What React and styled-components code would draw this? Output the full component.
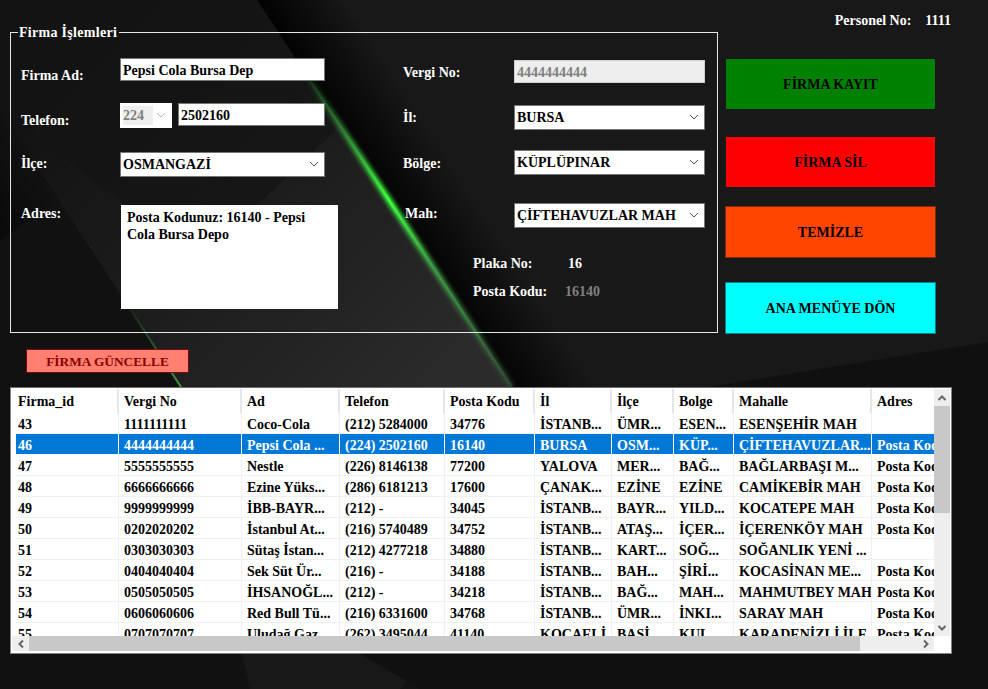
import React from 'react';
import styled, { createGlobalStyle } from 'styled-components';

const GlobalStyle = createGlobalStyle`
	* {
		box-sizing: border-box;
	}
	html, body {
		margin: 0;
		padding: 0;
		background: #151515;
	}
	body, input, select, textarea, button {
		font-family: 'Liberation Serif', 'Times New Roman', serif;
		font-size: 14px;
		font-weight: bold;
	}
`;

const Page = styled.div`
	position: relative;
	width: 988px;
	height: 689px;
	overflow: hidden;
	color: #fff;
`;

const Backdrop = styled.svg`
	position: absolute;
	inset: 0;
	z-index: 0;
`;

const Content = styled.div`
	position: relative;
	z-index: 1;
`;

const TopBar = styled.div`
	height: 23px;
	padding: 13px 37px 0 0;
	display: flex;
	justify-content: flex-end;
	gap: 14px;
	line-height: 16px;
`;

const MainRow = styled.div`
	display: flex;
	align-items: flex-start;
	padding-left: 10px;
	gap: 8px;
`;

const GroupBox = styled.fieldset`
	width: 708px;
	height: 310px;
	margin: 0;
	padding: 0;
	border: 1px solid #e6e6e6;
	display: flex;
`;

const GroupTitle = styled.legend`
	margin-left: 7px;
	padding: 2px 2px 0 1px;
	line-height: 16px;
	letter-spacing: 0.3px;
`;

const FormColumn = styled.div`
	width: ${(p) => p.$width}px;
	padding-left: ${(p) => p.$left}px;
	display: flex;
	flex-direction: column;
`;

const FieldRow = styled.div`
	display: flex;
	align-items: flex-start;
	margin-top: ${(p) => p.$gap}px;
`;

const FieldLabel = styled.label`
	flex: none;
	width: ${(p) => p.$width}px;
	padding-top: ${(p) => p.$drop}px;
	padding-left: ${(p) => p.$indent || 0}px;
	line-height: 16px;
`;

const TextBox = styled.input`
	width: ${(p) => p.$width}px;
	height: 23px;
	margin-left: ${(p) => p.$gapLeft || 0}px;
	padding: 3px 2px 0;
	border: 1px solid #767676;
	border-radius: 0;
	outline: none;
	background: #fff;
	color: #000;

	&:disabled {
		border-color: #cfcfcf;
		background: #eee;
		color: #808080;
	}
`;

const SelectBox = styled.div`
	position: relative;
	width: ${(p) => p.$width}px;
	height: 25px;
	background: #fff;
	border: 1px solid ${(p) => (p.$off ? '#fff' : '#767676')};
	flex: none;

	select {
		appearance: none;
		display: block;
		width: ${(p) => (p.$off ? '30px' : '100%')};
		height: ${(p) => (p.$off ? '19px' : '100%')};
		margin: ${(p) => (p.$off ? '2px' : '0')};
		padding: 0 ${(p) => (p.$off ? '0' : '2px')};
		border: 0;
		border-radius: 0;
		outline: none;
		background: ${(p) => (p.$off ? '#eee' : 'transparent')};
		color: ${(p) => (p.$off ? '#808080' : '#000')};
		opacity: 1;
	}
`;

const Chevron = styled.svg`
	position: absolute;
	right: 5px;
	top: 8px;
	pointer-events: none;
`;

const AddressBox = styled.textarea`
	width: 217px;
	height: 104px;
	margin: 1px;
	padding: 4px 6px;
	border: 0;
	border-radius: 0;
	outline: none;
	resize: none;
	overflow: hidden;
	background: #fff;
	color: #000;
	line-height: 17px;
`;

const InfoBlock = styled.div`
	margin: ${(p) => p.$gap}px 0 0 70px;
	display: flex;
	flex-direction: column;
	gap: 12px;
`;

const InfoRow = styled.div`
	display: flex;
	line-height: 16px;
`;

const InfoLabel = styled.span`
	width: ${(p) => p.$width}px;
`;

const InfoValue = styled.span`
	color: ${(p) => (p.$muted ? '#808080' : '#fff')};
`;

const ButtonColumn = styled.div`
	width: 209px;
	padding-top: 36px;
	display: flex;
	flex-direction: column;
`;

const ActionButton = styled.button`
	width: 209px;
	height: 50px;
	margin-top: ${(p) => p.$gap}px;
	padding: 2px 0 0;
	border: 0;
	background: ${(p) => p.$color};
	box-shadow: ${(p) => (p.$edge ? `0 0 0 1px ${p.$edge}` : 'none')};
	color: #000;
`;

const UpdateButton = styled.button`
	display: block;
	width: 163px;
	height: 24px;
	margin: 16px 0 0 26px;
	padding: 2px 0 0;
	border: 1px solid #7a0b0b;
	background: #ff7f70;
	color: #8b0000;
	font-size: 13.33px;
`;

const GridFrame = styled.div`
	width: 942px;
	height: 267px;
	margin: 14px 0 0 10px;
	padding: 1px 1px 2px 1px;
	border: 1px solid #80838c;
	border-top-color: #6c6c74;
	background: #fff;
	display: grid;
	grid-template-columns: 922px 16px;
	grid-template-rows: 247px 15px;
`;

const GridView = styled.div`
	overflow: hidden;
	padding-left: 4px;
	color: #000;
	line-height: 16px;
`;

const columns = '103px 123px 98px 105px 90px 77px 62px 60px 138px 300px';

const HeadRow = styled.div`
	display: grid;
	grid-template-columns: ${columns};
	width: 1156px;
	height: 24px;
`;

const HeadCell = styled.div`
	padding: 5px 0 0 ${(p) => (p.$first ? 2 : 5)}px;
	border-right: 2px solid #e6e6e6;
`;

const DataRow = styled.div`
	display: grid;
	grid-template-columns: ${columns};
	width: 1156px;
	height: 21px;
	color: ${(p) => (p.$selected ? '#fff' : '#000')};
`;

const DataCell = styled.div`
	overflow: hidden;
	white-space: nowrap;
	padding: 4px 0 0 ${(p) => (p.$first ? 2 : 5)}px;
	background: ${(p) => (p.$selected ? '#0078d7' : '#fff')};
	border-right: 1px solid ${(p) => (p.$selected ? '#fff' : '#f0f0f0')};
	border-bottom: 1px solid ${(p) => (p.$selected ? '#fff' : '#f0f0f0')};
`;

const VerticalBar = styled.div`
	background: #eee;
	display: flex;
	flex-direction: column;
	align-items: center;
`;

const HorizontalBar = styled.div`
	background: #eee;
	display: flex;
	align-items: center;
`;

const ArrowBox = styled.div`
	flex: none;
	width: ${(p) => p.$w}px;
	height: ${(p) => p.$h}px;
	display: flex;
	align-items: center;
	justify-content: center;
`;

const VerticalThumb = styled.div`
	width: 100%;
	height: 107px;
	background: #c8c8c8;
`;

const HorizontalThumb = styled.div`
	width: 831px;
	height: 100%;
	background: #c8c8c8;
`;

const BarSpacer = styled.div`
	flex: 1;
`;

const Corner = styled.div`
	background: #fff;
`;

const headers = ['Firma_id', 'Vergi No', 'Ad', 'Telefon', 'Posta Kodu', 'İl', 'İlçe', 'Bolge', 'Mahalle', 'Adres'];

const adres = 'Posta Kodunuz: ';

const rows = [
	['43', '1111111111', 'Coco-Cola', '(212) 5284000', '34776', 'İSTANB...', 'ÜMR...', 'ESEN...', 'ESENŞEHİR MAH', ''],
	['46', '4444444444', 'Pepsi Cola ...', '(224) 2502160', '16140', 'BURSA', 'OSM...', 'KÜP...', 'ÇİFTEHAVUZLAR...', adres],
	['47', '5555555555', 'Nestle', '(226) 8146138', '77200', 'YALOVA', 'MER...', 'BAĞ...', 'BAĞLARBAŞI M...', adres],
	['48', '6666666666', 'Ezine Yüks...', '(286) 6181213', '17600', 'ÇANAK...', 'EZİNE', 'EZİNE', 'CAMİKEBİR MAH', adres],
	['49', '9999999999', 'İBB-BAYR...', '(212) -', '34045', 'İSTANB...', 'BAYR...', 'YILD...', 'KOCATEPE MAH', adres],
	['50', '0202020202', 'İstanbul At...', '(216) 5740489', '34752', 'İSTANB...', 'ATAŞ...', 'İÇER...', 'İÇERENKÖY MAH', adres],
	['51', '0303030303', 'Sütaş İstan...', '(212) 4277218', '34880', 'İSTANB...', 'KART...', 'SOĞ...', 'SOĞANLIK YENİ ...', ''],
	['52', '0404040404', 'Sek Süt Ür...', '(216) -', '34188', 'İSTANB...', 'BAH...', 'ŞİRİ...', 'KOCASİNAN ME...', adres],
	['53', '0505050505', 'İHSANOĞL...', '(212) -', '34218', 'İSTANB...', 'BAĞ...', 'MAH...', 'MAHMUTBEY MAH', adres],
	['54', '0606060606', 'Red Bull Tü...', '(216) 6331600', '34768', 'İSTANB...', 'ÜMR...', 'İNKI...', 'SARAY MAH', adres],
	['55', '0707070707', 'Uludağ Gaz...', '(262) 3495044', '41140', 'KOCAELİ', 'BAŞİ...', 'KUL...', 'KARADENİZLİ İLE...', adres],
];

function ChevronIcon({ color = '#555' }) {
	return (
		<Chevron width="10" height="6" viewBox="0 0 10 6">
			<path d="M1 1 L5 5 L9 1" fill="none" stroke={color} strokeWidth="1" />
		</Chevron>
	);
}

function Dropdown({ value, width, off }) {
	return (
		<SelectBox $width={width} $off={off}>
			<select defaultValue={value} disabled={off}>
				<option>{value}</option>
			</select>
			<ChevronIcon color={off ? '#bbb' : '#555'} />
		</SelectBox>
	);
}

function ScrollArrow({ d }) {
	return (
		<svg width="10" height="10" viewBox="0 0 10 10">
			<path d={d} fill="none" stroke="#666" strokeWidth="2" />
		</svg>
	);
}

function Background() {
	return (
		<Backdrop width="988" height="689" viewBox="0 0 988 689">
			<defs>
				<linearGradient id="midPlate" x1="60" y1="60" x2="420" y2="420" gradientUnits="userSpaceOnUse">
					<stop offset="0" stopColor="#121212" />
					<stop offset="0.5" stopColor="#1d1d1d" />
					<stop offset="1" stopColor="#2b2b2b" />
				</linearGradient>
				<linearGradient id="shade" x1="380" y1="205" x2="450" y2="160" gradientUnits="userSpaceOnUse">
					<stop offset="0" stopColor="#000" />
					<stop offset="1" stopColor="#000" stopOpacity="0" />
				</linearGradient>
				<linearGradient id="shadeLow" x1="0" y1="240" x2="60" y2="200" gradientUnits="userSpaceOnUse">
					<stop offset="0" stopColor="#0a0a0a" />
					<stop offset="1" stopColor="#0a0a0a" stopOpacity="0" />
				</linearGradient>
				<linearGradient id="glow" x1="300" y1="65" x2="512" y2="387" gradientUnits="userSpaceOnUse">
					<stop offset="0" stopColor="#1f5a26" stopOpacity="0" />
					<stop offset="0.2" stopColor="#2f7a35" />
					<stop offset="0.42" stopColor="#3dff3d" />
					<stop offset="0.62" stopColor="#3f9a45" />
					<stop offset="1" stopColor="#3c5c3f" stopOpacity="0.5" />
				</linearGradient>
				<linearGradient id="glowLow" x1="120" y1="300" x2="181" y2="387" gradientUnits="userSpaceOnUse">
					<stop offset="0" stopColor="#2f8a35" stopOpacity="0" />
					<stop offset="1" stopColor="#3f9a45" />
				</linearGradient>
				<filter id="soft" x="-20%" y="-20%" width="140%" height="140%">
					<feGaussianBlur stdDeviation="2" />
				</filter>
				<filter id="softer" x="-20%" y="-20%" width="140%" height="140%">
					<feGaussianBlur stdDeviation="0.7" />
				</filter>
			</defs>
			<rect width="988" height="689" fill="#181818" />
			<polygon points="0,0 257,0 560,460 400,689 0,689" fill="url(#midPlate)" />
			<polygon points="0,0 257,0 340,126 200,260 0,110" fill="#141414" opacity="0.7" />
			<polygon points="0,110 181,387 250,689 0,689" fill="#111" />
			<polygon points="257,0 560,460 640,410 337,0" fill="url(#shade)" />
			<polygon points="0,110 60,200 0,240" fill="url(#shadeLow)" />
			<polygon points="988,342 640,398 360,654 420,689 988,689" fill="#101010" />
			<polygon points="0,654 988,654 988,689 0,689" fill="#111" opacity="0.7" />
			<line x1="300" y1="65" x2="512" y2="387" stroke="url(#glow)" strokeWidth="6" filter="url(#soft)" />
			<line x1="300" y1="65" x2="512" y2="387" stroke="url(#glow)" strokeWidth="2.4" filter="url(#softer)" />
			<line x1="120" y1="294" x2="181" y2="387" stroke="url(#glowLow)" strokeWidth="2" filter="url(#softer)" />
		</Backdrop>
	);
}

export default function App() {
	return (
		<Page>
			<GlobalStyle />
			<Background />
			<Content>
				<TopBar>
					<span>Personel No:</span>
					<span>1111</span>
				</TopBar>
				<MainRow>
					<GroupBox>
						<GroupTitle>Firma İşlemleri</GroupTitle>
						<FormColumn $width={392} $left={10}>
							<FieldRow $gap={17}>
								<FieldLabel $width={99} $drop={10}>Firma Ad:</FieldLabel>
								<TextBox $width={205} defaultValue="Pepsi Cola Bursa Dep" />
							</FieldRow>
							<FieldRow $gap={19}>
								<FieldLabel $width={99} $drop={10}>Telefon:</FieldLabel>
								<Dropdown value="224" width={52} off />
								<TextBox $width={147} $gapLeft={6} defaultValue="2502160" />
							</FieldRow>
							<FieldRow $gap={23}>
								<FieldLabel $width={99} $drop={4}>İlçe:</FieldLabel>
								<Dropdown value="OSMANGAZİ" width={205} />
							</FieldRow>
							<FieldRow $gap={27}>
								<FieldLabel $width={99} $drop={2}>Adres:</FieldLabel>
								<AddressBox defaultValue="Posta Kodunuz: 16140 - Pepsi Cola Bursa Depo" />
							</FieldRow>
						</FormColumn>
						<FormColumn $width={314} $left={0}>
							<FieldRow $gap={19}>
								<FieldLabel $width={111} $drop={5}>Vergi No:</FieldLabel>
								<TextBox $width={191} disabled defaultValue="4444444444" />
							</FieldRow>
							<FieldRow $gap={22}>
								<FieldLabel $width={111} $drop={5}>İl:</FieldLabel>
								<Dropdown value="BURSA" width={191} />
							</FieldRow>
							<FieldRow $gap={20}>
								<FieldLabel $width={111} $drop={6}>Bölge:</FieldLabel>
								<Dropdown value="KÜPLÜPINAR" width={191} />
							</FieldRow>
							<FieldRow $gap={28}>
								<FieldLabel $width={111} $drop={3} $indent={2}>Mah:</FieldLabel>
								<Dropdown value="ÇİFTEHAVUZLAR MAH" width={191} />
							</FieldRow>
							<InfoBlock $gap={28}>
								<InfoRow>
									<InfoLabel $width={95}>Plaka No:</InfoLabel>
									<InfoValue>16</InfoValue>
								</InfoRow>
								<InfoRow>
									<InfoLabel $width={92}>Posta Kodu:</InfoLabel>
									<InfoValue $muted>16140</InfoValue>
								</InfoRow>
							</InfoBlock>
						</FormColumn>
					</GroupBox>
					<ButtonColumn>
						<ActionButton $gap={0} $color="#008000">FİRMA KAYIT</ActionButton>
						<ActionButton $gap={28} $color="#ff0000">FİRMA SİL</ActionButton>
						<ActionButton $gap={20} $color="#ff4500" $edge="#7f2a10">TEMİZLE</ActionButton>
						<ActionButton $gap={26} $color="#00ffff" $edge="#0a7f86">ANA MENÜYE DÖN</ActionButton>
					</ButtonColumn>
				</MainRow>
				<UpdateButton>FİRMA GÜNCELLE</UpdateButton>
				<GridFrame>
					<GridView>
						<HeadRow>
							{headers.map((h, i) => (
								<HeadCell key={h} $first={i === 0}>{h}</HeadCell>
							))}
						</HeadRow>
						{rows.map((row) => {
							const selected = row[0] === '46';
							return (
								<DataRow key={row[0]} $selected={selected}>
									{row.map((cell, i) => (
										<DataCell key={i} $first={i === 0} $selected={selected}>{cell}</DataCell>
									))}
								</DataRow>
							);
						})}
					</GridView>
					<VerticalBar>
						<ArrowBox $w={16} $h={17}>
							<ScrollArrow d="M1.5 7 L5 3.5 L8.5 7" />
						</ArrowBox>
						<VerticalThumb />
						<BarSpacer />
						<ArrowBox $w={16} $h={17}>
							<ScrollArrow d="M1.5 3 L5 6.5 L8.5 3" />
						</ArrowBox>
					</VerticalBar>
					<HorizontalBar>
						<ArrowBox $w={17} $h={15}>
							<ScrollArrow d="M7 1.5 L3.5 5 L7 8.5" />
						</ArrowBox>
						<HorizontalThumb />
						<BarSpacer />
						<ArrowBox $w={17} $h={15}>
							<ScrollArrow d="M3 1.5 L6.5 5 L3 8.5" />
						</ArrowBox>
					</HorizontalBar>
					<Corner />
				</GridFrame>
			</Content>
		</Page>
	);
}
